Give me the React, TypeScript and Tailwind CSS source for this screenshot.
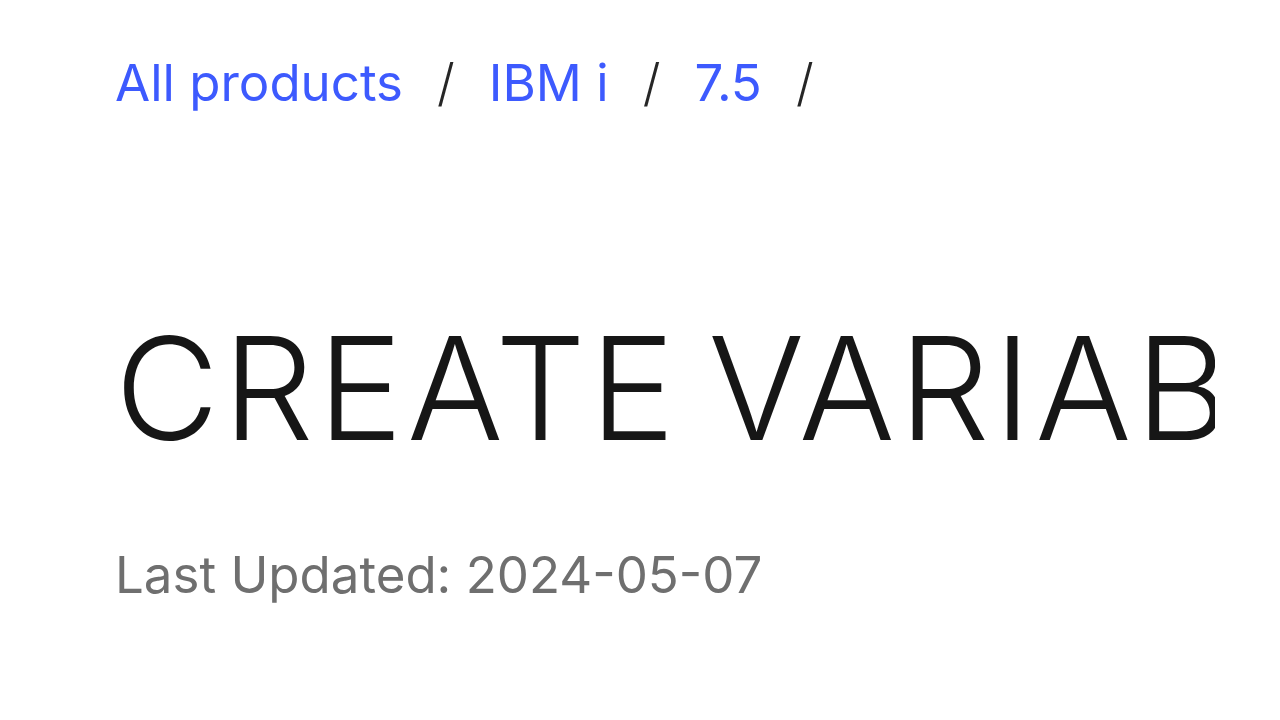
export default function App() {
  const crumbs = ["All products", "IBM i", "7.5"];
  return (
    <div className="h-[720px] w-[1280px] overflow-hidden bg-white font-['Inter','Liberation_Sans',sans-serif]">
      <div className="pl-[115px] pt-[57px]">
        <nav className="flex items-center text-[51px] leading-none text-[#3d5afe]">
          {crumbs.map((c) => (
            <span key={c} className="flex items-center">
              <span>{c}</span>
              <span className="mx-[34px] font-light text-[#262626]">/</span>
            </span>
          ))}
        </nav>
        <div className="mt-[208px] w-[1100px] overflow-hidden">
          <h1 className="whitespace-nowrap text-[143px] font-light leading-none tracking-[4px] text-[#161616] [word-spacing:-15px]">
            CREATE VARIABLE
          </h1>
        </div>
        <p className="mt-[90px] text-[51px] leading-none text-[#6f6f6f]">Last Updated: 2024-05-07</p>
      </div>
    </div>
  );
}
